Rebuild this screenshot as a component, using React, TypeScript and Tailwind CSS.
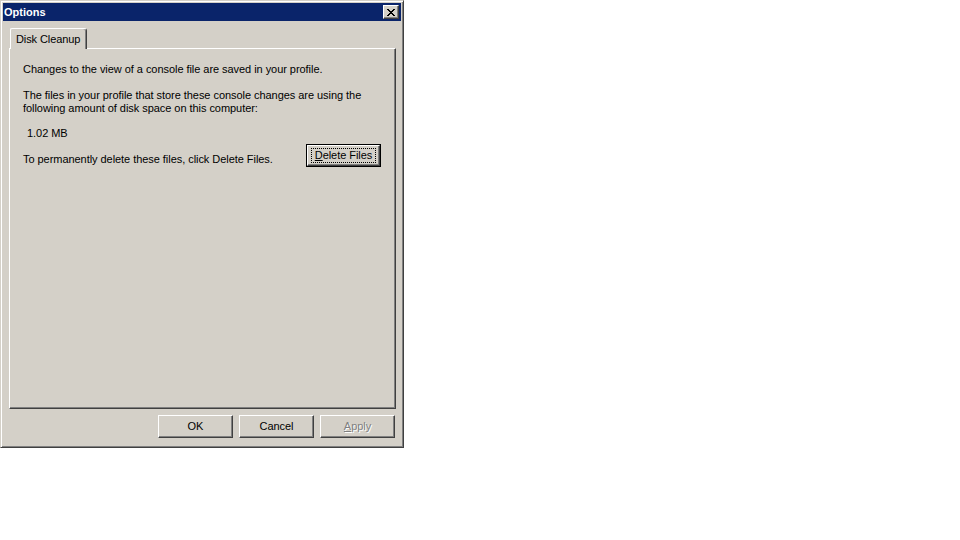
import React from "react";

const F = { fontFamily: '"Liberation Sans", Arial, sans-serif' };

function ClassicButton({
  children,
  disabled,
  focused,
}: {
  children: React.ReactNode;
  disabled?: boolean;
  focused?: boolean;
}) {
  const inner = (
    <div className="w-full h-full border-t border-l border-t-white border-l-white border-b border-r border-b-[#404040] border-r-[#404040] shadow-[inset_-1px_-1px_0_#808080] flex items-center justify-center">
      {focused ? (
        <div className="px-[3px] h-[15px] flex items-center border border-dotted border-black">
          {children}
        </div>
      ) : (
        children
      )}
    </div>
  );
  return (
    <div
      className={
        "w-[75px] h-[23px] bg-[#d4d0c8] text-[11px] leading-[13px] tracking-[-0.05px] " +
        (focused ? "border border-black " : "") +
        (disabled ? "text-[#808080] [text-shadow:1px_1px_0_#fff]" : "text-black")
      }
    >
      {inner}
    </div>
  );
}

export default function App() {
  return (
    <div className="w-[960px] h-[540px] bg-white" style={F}>
      <div className="w-[404px] h-[448px] bg-[#d4d0c8] border-t border-l border-t-[#d4d0c8] border-l-[#d4d0c8] border-b border-r border-b-[#404040] border-r-[#404040] shadow-[inset_1px_1px_0_#fff,inset_-1px_-1px_0_#808080] p-[2px] flex flex-col">
        {/* Title bar */}
        <div className="h-[18px] bg-[#0a246a] flex items-center justify-between pl-[1px] pr-[2px]">
          <span className="text-white font-bold text-[11px] leading-[13px]">Options</span>
          <div className="w-[16px] h-[14px] bg-[#d4d0c8] border-t border-l border-t-white border-l-white border-b border-r border-b-[#404040] border-r-[#404040] shadow-[inset_-1px_-1px_0_#808080] flex items-center justify-center">
            <svg width="8" height="7" viewBox="0 0 8 7" shapeRendering="crispEdges">
              <path d="M0 0h2v1h-2zM6 0h2v1h-2zM1 1h2v1h-2zM5 1h2v1h-2zM2 2h4v1h-4zM3 3h2v1h-2zM2 4h4v1h-4zM1 5h2v1h-2zM5 5h2v1h-2zM0 6h2v1h-2zM6 6h2v1h-2z" fill="#000" />
            </svg>
          </div>
        </div>

        {/* Tab strip */}
        <div className="mt-[7px] pl-[7px] h-[20px] flex items-end">
          <div className="h-[21px] -mb-[1px] relative z-10 bg-[#d4d0c8] border-t border-l border-t-white border-l-white border-r border-r-[#404040] shadow-[inset_-1px_0_0_#808080] rounded-tl-[2px] rounded-tr-[3px] pl-[5px] pr-[6px] flex items-center text-[11px] leading-[13px] tracking-[-0.1px] text-black">
            Disk Cleanup
          </div>
        </div>

        {/* Tab panel */}
        <div className="ml-[6px] w-[387px] h-[361px] border-t border-l border-t-white border-l-white border-b border-r border-b-[#404040] border-r-[#404040] shadow-[inset_-1px_-1px_0_#808080] pl-[13px] pr-[14px] pt-[14px] text-[11px] leading-[13px] tracking-[-0.05px] text-black flex flex-col">
          <p>Changes to the view of a console file are saved in your profile.</p>
          <p className="mt-[13px]">
            The files in your profile that store these console changes are using the
            <br />
            following amount of disk space on this computer:
          </p>
          <p className="mt-[12px] pl-[4px]">1.02 MB</p>
          <div className="mt-[4px] flex items-start justify-between">
            <p className="mt-[9px]">To permanently delete these files, click Delete Files.</p>
            <ClassicButton focused>
              <span>
                <span className="underline">D</span>elete Files
              </span>
            </ClassicButton>
          </div>
        </div>

        {/* Buttons */}
        <div className="mt-[6px] flex justify-end gap-[6px] pr-[6px]">
          <ClassicButton>OK</ClassicButton>
          <ClassicButton>Cancel</ClassicButton>
          <ClassicButton disabled>
            <span>
              <span className="underline">A</span>pply
            </span>
          </ClassicButton>
        </div>
      </div>
    </div>
  );
}
